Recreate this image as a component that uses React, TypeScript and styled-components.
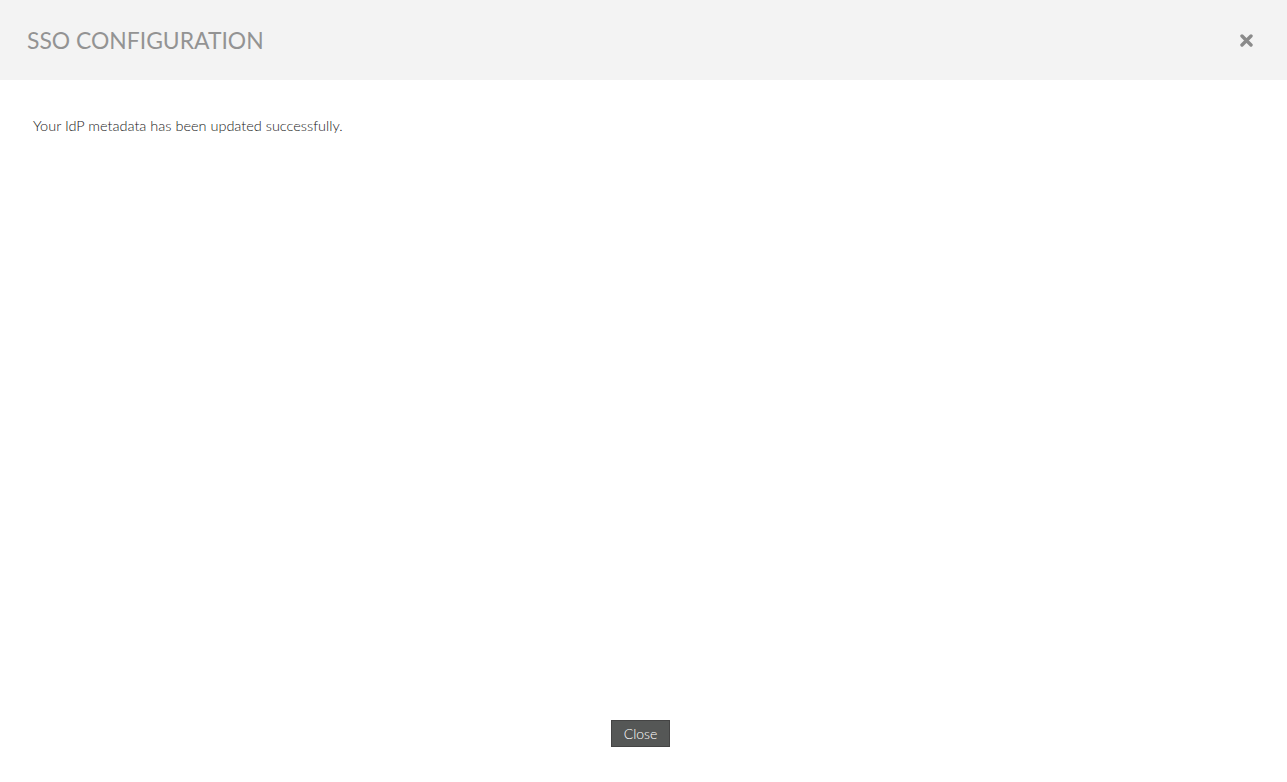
import styled, { createGlobalStyle } from 'styled-components';

const GlobalStyle = createGlobalStyle`
    html, body {
        margin: 0;
        padding: 0;
        background: #ffffff;
    }
    #root {
        height: 100vh;
    }
`;

const Modal = styled.div`
    display: flex;
    flex-direction: column;
    height: 100vh;
    font-family: Lato, "Open Sans", sans-serif;
`;

const Header = styled.header`
    display: flex;
    align-items: center;
    justify-content: space-between;
    height: 80px;
    padding: 0 33px 0 27px;
    background: #f3f3f3;
    box-sizing: border-box;
`;

const Title = styled.h1`
    margin: 0;
    font-size: 22.9px;
    font-weight: 400;
    color: #939393;
`;

const CloseIcon = styled.button`
    display: flex;
    align-items: center;
    justify-content: center;
    width: 16px;
    height: 16px;
    padding: 0;
    border: none;
    background: none;
    cursor: pointer;
`;

const Body = styled.main`
    flex: 1;
    padding: 37px 33px;
`;

const Message = styled.p`
    margin: 0;
    font-size: 14.5px;
    font-weight: 300;
    color: #222222;
`;

const Footer = styled.footer`
    display: flex;
    justify-content: center;
    padding: 0 6px 35px 0;
`;

const Button = styled.button`
    height: 27px;
    padding: 0 12px;
    border: 1px solid #444;
    background: #555756;
    color: #ffffff;
    font-family: Lato, "Open Sans", sans-serif;
    font-size: 14px;
    font-weight: 300;
    cursor: pointer;
`;

const App = () => {
    return (
        <>
            <GlobalStyle />
            <Modal>
                <Header>
                    <Title>SSO CONFIGURATION</Title>
                    <CloseIcon aria-label="close">
                        <svg width="13" height="13" viewBox="0 0 13 13">
                            <path d="M2 2 L11 11 M11 2 L2 11" stroke="#8a8a8a" strokeWidth="3.4" strokeLinecap="round" />
                        </svg>
                    </CloseIcon>
                </Header>
                <Body>
                    <Message>Your IdP metadata has been updated successfully.</Message>
                </Body>
                <Footer>
                    <Button>Close</Button>
                </Footer>
            </Modal>
        </>
    )
}

export default App;
